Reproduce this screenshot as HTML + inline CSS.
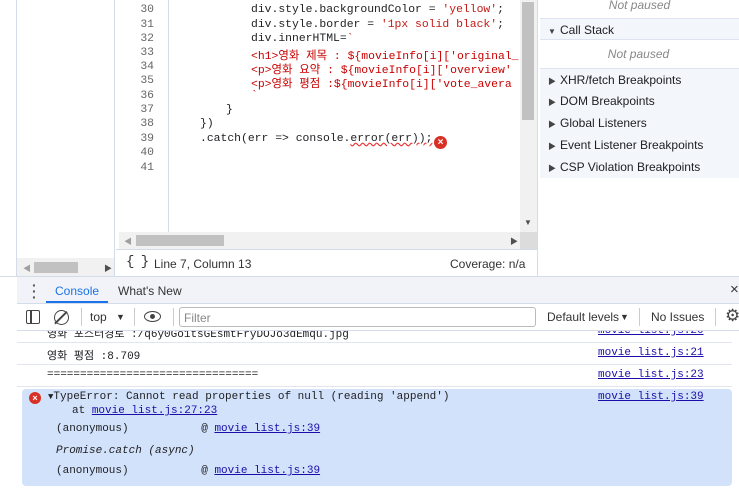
<!DOCTYPE html>
<html><head><meta charset="utf-8"><style>
*{margin:0;padding:0;box-sizing:border-box}
body{width:739px;height:489px;overflow:hidden;background:#fff;font-family:"Liberation Sans","Noto Sans CJK KR",sans-serif;font-size:12px;color:#202124;position:relative}
.abs{position:absolute}
.mono{font-family:"Liberation Mono","Noto Sans CJK KR",monospace;font-size:11px;white-space:pre}
.code{position:absolute;left:0;top:0;width:520px;height:232px;overflow:hidden;font-family:"Liberation Mono","Noto Sans CJK KR",monospace;font-size:11.4px;white-space:pre}
.ln{position:absolute;left:118px;width:36px;text-align:right;color:#666;}
.cl{position:absolute;white-space:pre;color:#202124}
.r{color:#c80000}
.str{color:#c41a16}
.rp{position:absolute;left:540px;width:199px;height:22px;background:#f3f6fb;line-height:22px;padding-left:8px;font-size:12px;color:#202124}
.tri{display:inline-block;font-size:8px;width:12px;color:#444}
.link{color:#1a0dab;text-decoration:underline;font-family:"Liberation Mono",monospace;font-size:11px;position:absolute}
.sep{position:absolute;left:17px;width:715px;height:1px;background:#e0e5ee}
</style></head><body>
<div class="abs" style="left:0;top:0;width:17px;height:277px;background:#fff;border-right:1px solid #d4dcea"></div>
<div class="abs" style="left:17px;top:0;width:98px;height:258px;background:#fff;border-right:1px solid #d4dcea"></div>
<div class="abs" style="left:17px;top:258px;width:98px;height:18px;background:#f1f1f1;border-right:1px solid #d4dcea"></div>
<div class="abs" style="left:34px;top:262px;width:44px;height:11px;background:#c1c1c1"></div>
<div class="abs" style="left:23px;top:263px;font-size:8px;color:#a0a0a0">◀</div>
<div class="abs" style="left:104px;top:263px;font-size:8px;color:#505050">▶</div>
<div class="abs" style="left:168px;top:0;width:1px;height:232px;background:#d4dcea"></div>
<div class="code">
<div class="ln" style="top:4px">30</div><div class="cl" style="left:251px;top:4px">div.style.backgroundColor = <span class="str">'yellow'</span>;</div>
<div class="ln" style="top:19px">31</div><div class="cl" style="left:251px;top:19px">div.style.border = <span class="str">'1px solid black'</span>;</div>
<div class="ln" style="top:33px">32</div><div class="cl" style="left:251px;top:33px">div.innerHTML=<span class="str">`</span></div>
<div class="ln" style="top:47px">33</div><div class="cl r" style="left:251px;top:47px">&lt;h1&gt;영화 제목 : ${movieInfo[i]['original_</div>
<div class="ln" style="top:61px">34</div><div class="cl r" style="left:251px;top:61px">&lt;p&gt;영화 요약 : ${movieInfo[i]['overview'</div>
<div class="ln" style="top:75px">35</div><div class="cl r" style="left:251px;top:75px">&lt;p&gt;영화 평점 :${movieInfo[i]['vote_avera</div>
<div class="ln" style="top:90px">36</div><div class="cl r" style="left:251px;top:90px">`</div>
<div class="ln" style="top:104px">37</div><div class="cl" style="left:226px;top:104px">}</div>
<div class="ln" style="top:118px">38</div><div class="cl" style="left:200px;top:118px">})</div>
<div class="ln" style="top:133px">39</div><div class="cl" style="left:200px;top:133px">.catch(err =&gt; console.<span style="text-decoration:underline wavy #e33;">error(err));</span></div>
<div class="ln" style="top:147px">40</div>
<div class="ln" style="top:162px">41</div>
</div>
<div class="abs" style="left:434px;top:136px;width:13px;height:13px;border-radius:50%;background:#d93025;color:#fff;font-size:10px;line-height:13px;text-align:center;font-weight:bold">×</div>
<div class="abs" style="left:520px;top:0;width:17px;height:232px;background:#f1f1f1"></div>
<div class="abs" style="left:522px;top:2px;width:12px;height:118px;background:#c1c1c1"></div>
<div class="abs" style="left:524px;top:218px;font-size:8px;color:#505050">▼</div>
<div class="abs" style="left:119px;top:232px;width:401px;height:17px;background:#f1f1f1"></div>
<div class="abs" style="left:136px;top:235px;width:88px;height:11px;background:#c1c1c1"></div>
<div class="abs" style="left:124px;top:236px;font-size:8px;color:#a0a0a0">◀</div>
<div class="abs" style="left:510px;top:236px;font-size:8px;color:#505050">▶</div>
<div class="abs" style="left:520px;top:232px;width:17px;height:17px;background:#dcdcdc"></div>
<div class="abs" style="left:116px;top:249px;width:422px;height:1px;background:#d4dcea"></div>
<div class="abs" style="left:126px;top:254px;font-size:14px;font-family:'Liberation Mono',monospace;color:#333;letter-spacing:-1px">{ }</div>
<div class="abs" style="left:154px;top:257px;font-size:12px;color:#333">Line 7, Column 13</div>
<div class="abs" style="left:450px;top:257px;font-size:12px;color:#333">Coverage: n/a</div>
<div class="abs" style="left:537px;top:0;width:1px;height:277px;background:#d4dcea"></div>
<div class="abs" style="left:538px;top:0;width:201px;height:18px;text-align:center;font-style:italic;color:#888;font-size:12px;line-height:10px;padding-left:2px">Not paused</div>
<div class="rp" style="top:18px;border-top:1px solid #dde4ef;border-bottom:1px solid #dde4ef"><span class="tri">▼</span>Call Stack</div>
<div class="abs" style="left:538px;top:47px;width:201px;text-align:center;font-style:italic;color:#888">Not paused</div>
<div class="rp" style="top:68px;border-top:1px solid #dde4ef"><span class="tri">▶</span>XHR/fetch Breakpoints</div>
<div class="rp" style="top:90px"><span class="tri">▶</span>DOM Breakpoints</div>
<div class="rp" style="top:112px"><span class="tri">▶</span>Global Listeners</div>
<div class="rp" style="top:134px"><span class="tri">▶</span>Event Listener Breakpoints</div>
<div class="rp" style="top:156px;height:22px"><span class="tri">▶</span>CSP Violation Breakpoints</div>
<div class="abs" style="left:0;top:276px;width:739px;height:1px;background:#d4dcea"></div>
<div class="abs" style="left:17px;top:277px;width:722px;height:27px;background:#f1f3f9;border-bottom:1px solid #d4dcea"></div>
<div class="abs" style="left:32px;top:282px;font-size:14px;color:#555;line-height:6px;font-weight:bold">·<br>·<br>·</div>
<div class="abs" style="left:55px;top:284px;font-size:12px;color:#1a73e8">Console</div>
<div class="abs" style="left:46px;top:301px;width:62px;height:2px;background:#1a73e8"></div>
<div class="abs" style="left:118px;top:284px;font-size:12px;color:#333">What's New</div>
<div class="abs" style="left:730px;top:281px;font-size:15px;color:#333">×</div>
<div class="abs" style="left:17px;top:305px;width:722px;height:26px;background:#fff;border-bottom:1px solid #d4dcea"></div>
<div class="abs" style="left:26px;top:310px;width:14px;height:14px;border:1.5px solid #444;border-radius:2px"></div>
<div class="abs" style="left:30px;top:310px;width:1.5px;height:14px;background:#444"></div>
<div class="abs" style="left:54px;top:310px;width:15px;height:15px;border:1.5px solid #444;border-radius:50%"></div>
<div class="abs" style="left:60px;top:309px;width:1.5px;height:17px;background:#444;transform:rotate(45deg)"></div>
<div class="abs" style="left:81px;top:308px;width:1px;height:18px;background:#ccc"></div>
<div class="abs" style="left:90px;top:310px;color:#333">top</div>
<div class="abs" style="left:116px;top:312px;font-size:9px;color:#333">▼</div>
<div class="abs" style="left:134px;top:308px;width:1px;height:18px;background:#ccc"></div>
<div class="abs" style="left:144px;top:311px;width:17px;height:11px;border:1.5px solid #444;border-radius:50%"></div>
<div class="abs" style="left:150px;top:314px;width:5px;height:5px;background:#444;border-radius:50%"></div>
<div class="abs" style="left:173px;top:308px;width:1px;height:18px;background:#ccc"></div>
<div class="abs" style="left:179px;top:307px;width:357px;height:20px;border:1px solid #bbb;border-radius:3px;padding:3px 4px;color:#888">Filter</div>
<div class="abs" style="left:547px;top:310px;color:#333">Default levels</div>
<div class="abs" style="left:620px;top:312px;font-size:9px;color:#333">▼</div>
<div class="abs" style="left:639px;top:308px;width:1px;height:18px;background:#ccc"></div>
<div class="abs" style="left:651px;top:310px;color:#333">No Issues</div>
<div class="abs" style="left:715px;top:308px;width:1px;height:18px;background:#ccc"></div>
<div class="abs" style="left:725px;top:306px;font-size:17px;color:#444">⚙</div>
<div class="abs mono" style="left:47px;top:325px;color:#202124;clip-path:inset(6px 0 0 0)">영화 포스터경로 :/q6y0Go1tsGEsmtFryDOJo3dEmqu.jpg</div>
<div class="link" style="left:598px;top:325px;clip-path:inset(6px 0 0 0)">movie list.js:20</div>
<div class="sep" style="top:342px"></div>
<div class="abs mono" style="left:47px;top:347px">영화 평점 :8.709</div>
<div class="link" style="left:598px;top:347px">movie list.js:21</div>
<div class="sep" style="top:364px"></div>
<div class="abs mono" style="left:47px;top:369px">================================</div>
<div class="link" style="left:598px;top:369px">movie list.js:23</div>
<div class="sep" style="top:386px"></div>
<div class="abs" style="left:22px;top:389px;width:710px;height:97px;background:#d3e2fb;border-radius:4px"></div>
<div class="abs" style="left:29px;top:392px;width:12px;height:12px;border-radius:50%;background:#d93025;color:#fff;font-size:9px;line-height:12px;text-align:center;font-weight:bold">×</div>
<div class="abs mono" style="left:48px;top:391px;color:#202124"><span style="font-size:9px">▼</span>TypeError: Cannot read properties of null (reading 'append')</div>
<div class="link" style="left:598px;top:391px">movie list.js:39</div>
<div class="abs mono" style="left:72px;top:405px">at <span style="color:#1a0dab;text-decoration:underline">movie list.js:27:23</span></div>
<div class="abs mono" style="left:56px;top:423px">(anonymous)           @ <span style="color:#1a0dab;text-decoration:underline">movie list.js:39</span></div>
<div class="abs mono" style="left:56px;top:445px;font-style:italic">Promise.catch (async)</div>
<div class="abs mono" style="left:56px;top:465px">(anonymous)           @ <span style="color:#1a0dab;text-decoration:underline">movie list.js:39</span></div>
</body></html>
